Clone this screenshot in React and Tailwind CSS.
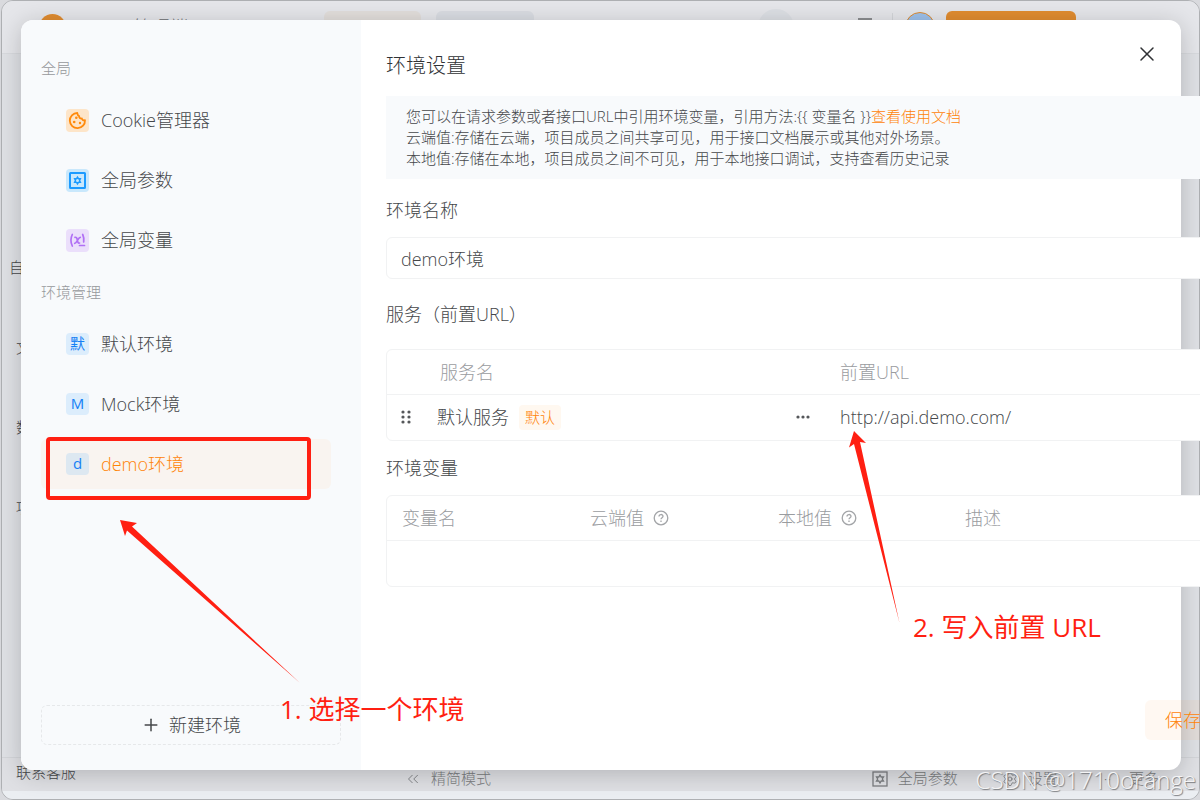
import React, { useState } from 'react';
import { X, Plus, ChevronsLeft, Settings } from 'lucide-react';

const CookieIcon = () => (
  <svg viewBox="0 0 23 23" className="size-[23px]" fill="none">
    <rect width="23" height="23" rx="4" fill="#fde5c9" />
    <path
      d="M11.300 4a7.600 7.600 0 1 0 7.700 7.200c-1.600.5-2.900-.2-3.100-1.700-1.700.3-3-.8-2.700-2.400-1.200-.4-1.800-1.600-1.900-3.100Z"
      stroke="#ff8a0c"
      strokeWidth="1.800"
      strokeLinejoin="round"
    />
    <circle cx="10.300" cy="8.800" r="1.300" fill="#ff8a0c" />
    <circle cx="8.200" cy="13" r="1.300" fill="#ff8a0c" />
    <circle cx="14" cy="14" r="1.200" fill="#ff8a0c" />
  </svg>
);

const ParamsIcon = () => (
  <svg viewBox="0 0 23 23" className="size-[23px]" fill="none">
    <rect width="23" height="23" rx="4" fill="#c9e8fc" />
    <rect x="4" y="4" width="15" height="15" rx="0.5" stroke="#1c9bff" strokeWidth="2" />
    <path
      d="M11.500 6.800l1.400 2.200 2.600.1-1.200 2.400 1.200 2.400-2.600.1-1.400 2.200-1.400-2.200-2.600-.1 1.200-2.400-1.200-2.400 2.600-.1Z"
      fill="#1c9bff"
    />
    <circle cx="11.500" cy="11.500" r="1.500" fill="#c9e8fc" />
  </svg>
);

const VariableIcon = () => (
  <svg viewBox="0 0 23 23" className="size-[23px]" fill="none" stroke="#b170f5" strokeWidth="1.700" strokeLinecap="round">
    <rect width="23" height="23" rx="4" fill="#ebdffb" stroke="none" />
    <path d="M6.300 5.500c-1.700 3.500-1.700 8 0 11.500M16.700 5.500c1 2 1.300 4.500 1 7.500M13.500 16.500h5" />
    <path d="M9 8.300c1.400-.3 1.900.6 2.300 2.600.4 2.300.9 3.500 2.200 3.100M14.300 8.300c-2 0-3.400 6-5.600 6" />
  </svg>
);

const LetterIcon = ({ children }) => (
  <span className="flex h-[22px] w-[23px] items-center justify-center rounded bg-[#1890ff]/12 text-[15px] font-normal text-[#1680f5]">
    {children}
  </span>
);

const HelpIcon = () => (
  <svg viewBox="0 0 16 16" className="size-4" fill="none" stroke="#a3a5a8" strokeWidth="1.300">
    <circle cx="8" cy="8" r="6.800" />
    <path d="M6 6.500c0-2.600 4-2.600 4-.2 0 1.400-2 1.400-2 3" />
    <path d="M8 10.600v1.400" />
  </svg>
);

const globalItems = [
  { id: 'cookie', name: 'Cookie管理器', icon: <CookieIcon /> },
  { id: 'params', name: '全局参数', icon: <ParamsIcon /> },
  { id: 'vars', name: '全局变量', icon: <VariableIcon /> },
];

const envItems = [
  { id: 'default', name: '默认环境', icon: <LetterIcon>默</LetterIcon> },
  { id: 'mock', name: 'Mock环境', icon: <LetterIcon>M</LetterIcon> },
  { id: 'demo', name: 'demo环境', icon: <LetterIcon>d</LetterIcon> },
];

const NavList = ({ items, active, onSelect }) => (
  <ul className="mr-[10px] flex flex-col gap-[10px]">
    {items.map((item) => (
      <li key={item.id}>
        <button
          type="button"
          onClick={() => onSelect(item.id)}
          className={`flex h-[50px] w-full items-center gap-3 rounded-md pl-[25px] text-lg ${
            active === item.id ? 'bg-[#f9f4f0] text-[#ff8409]' : 'text-[#45474a]'
          }`}
        >
          {item.icon}
          <span>{item.name}</span>
        </button>
      </li>
    ))}
  </ul>
);

const Sidebar = ({ active, onSelect }) => (
  <aside className="flex w-[340px] shrink-0 flex-col rounded-l-xl bg-[#f8fafc] px-5 pt-[37px] pb-[25px]">
    <h2 className="mb-4 h-[22px] text-[15px] leading-[22px] text-[#96989b]">全局</h2>
    <NavList items={globalItems} active={active} onSelect={onSelect} />
    <h2 className="mt-4 mb-4 h-[22px] text-[15px] leading-[22px] text-[#96989b]">环境管理</h2>
    <NavList items={envItems} active={active} onSelect={onSelect} />
    <button
      type="button"
      className="mt-auto flex h-10 items-center justify-center gap-2 rounded-md border border-dashed border-[#e6e8ea] text-lg text-[#45474a]"
    >
      <Plus size={20} strokeWidth={1.8} />
      新建环境
    </button>
  </aside>
);

const ServiceTable = () => (
  <div className="rounded-md border border-[#f1f2f3] bg-white">
    <table className="w-full table-fixed text-left text-lg">
      <thead>
        <tr className="h-11 border-b border-[#f1f2f3] text-[#9a9c9f]">
          <th className="w-[50px]" aria-label="排序" />
          <th className="w-[358px] pl-[3px] font-light">服务名</th>
          <th className="w-[45px]" aria-label="更多" />
          <th className="font-light">前置URL</th>
        </tr>
      </thead>
      <tbody>
        <tr className="h-[46px]">
          <td className="pl-[14px]">
            <svg viewBox="0 0 10 14" className="h-[14px] w-[10px]" fill="#55575a">
              <circle cx="2" cy="2" r="1.600" />
              <circle cx="8" cy="2" r="1.600" />
              <circle cx="2" cy="7" r="1.600" />
              <circle cx="8" cy="7" r="1.600" />
              <circle cx="2" cy="12" r="1.600" />
              <circle cx="8" cy="12" r="1.600" />
            </svg>
          </td>
          <td>
            <div className="flex items-center gap-[10px]">
              默认服务
              <span className="rounded bg-[#fff8f0] px-[6px] text-[15px] leading-[25px] text-[#ff8409]">默认</span>
            </div>
          </td>
          <td>
            <button type="button" aria-label="更多操作" className="flex h-6 w-6 items-center justify-start">
              <svg viewBox="0 0 16 4" className="h-1 w-4" fill="#55575a">
                <circle cx="3" cy="2" r="1.600" />
                <circle cx="8" cy="2" r="1.600" />
                <circle cx="13" cy="2" r="1.600" />
              </svg>
            </button>
          </td>
          <td>http://api.demo.com/</td>
        </tr>
      </tbody>
    </table>
  </div>
);

const VariableTable = () => (
  <div className="rounded-md border border-[#f1f2f3] bg-white">
    <table className="w-full table-fixed text-left text-lg">
      <thead>
        <tr className="h-11 border-b border-[#f1f2f3] text-[#9a9c9f]">
          <th className="w-[188px] pl-[15px] font-light">变量名</th>
          <th className="w-[188px] pl-[15px] font-light">
            <span className="flex items-center gap-[9px]">
              云端值 <HelpIcon />
            </span>
          </th>
          <th className="w-[187px] pl-[15px] font-light">
            <span className="flex items-center gap-[9px]">
              本地值 <HelpIcon />
            </span>
          </th>
          <th className="pl-[15px] font-light">描述</th>
        </tr>
      </thead>
      <tbody>
        <tr className="h-[46px]">
          <td colSpan={4} />
        </tr>
      </tbody>
    </table>
  </div>
);

const EnvSettings = () => {
  const [name, setName] = useState('demo环境');

  return (
    <main className="-mr-[60px] flex min-w-0 flex-1 flex-col pt-[33px] pb-[30px] pl-[25px] text-[#45474a]">
      <h1 className="mb-[17px] h-[26px] text-xl leading-[26px] text-[#303235]">环境设置</h1>
      <div className="bg-[#f8fafc] px-5 py-[10px] text-[15px] leading-[21px]">
        <p>
          您可以在请求参数或者接口URL中引用环境变量，引用方法:{'{{ 变量名 }}'}
          <a href="#" className="text-[#ff8409]">查看使用文档</a>
        </p>
        <p>云端值:存储在云端，项目成员之间共享可见，用于接口文档展示或其他对外场景。</p>
        <p>本地值:存储在本地，项目成员之间不可见，用于本地接口调试，支持查看历史记录</p>
      </div>
      <label htmlFor="env-name" className="mt-[19px] mb-[15px] h-6 text-lg leading-6">
        环境名称
      </label>
      <input
        id="env-name"
        value={name}
        onChange={(e) => setName(e.target.value)}
        className="h-[42px] rounded-md border border-[#f1f2f3] bg-white px-[14px] text-lg outline-none"
      />
      <h2 className="mt-[23px] mb-[23px] h-6 text-lg leading-6">服务（前置URL）</h2>
      <ServiceTable />
      <h2 className="mt-[15px] mb-[15px] h-6 text-lg leading-6">环境变量</h2>
      <VariableTable />
      <div className="mt-auto flex justify-end pr-5">
        <button type="button" className="h-10 rounded-md bg-[#ff8c1a]/6 px-5 text-lg text-[#ff8409]">
          保存
        </button>
      </div>
    </main>
  );
};

// Workbench window that sits dimmed behind the dialog
const Workbench = () => (
  <div className="ml-px flex h-full flex-col overflow-hidden rounded-xl border border-[#aeb0b3] bg-[#dfe1e5]">
    <header className="flex h-[53px] shrink-0 items-center border-b border-[#d8dade] bg-[#e5e6ea] pl-[37px] text-lg text-[#6b6d70]">
      <span className="size-[27px] rounded-full bg-[#e08c30]" />
      <span className="ml-[68px] w-[190px]">管理端</span>
      <span className="h-8 w-[97px] rounded-md bg-[#e2dedb]" />
      <span className="ml-[15px] h-8 w-[98px] rounded-md bg-[#d9dce2]" />
      <span className="ml-auto size-9 rounded-full bg-[#dcdfe4]" />
      <span className="ml-[64px] h-[18px] w-[14px] border-2 border-[#8b8d90]" />
      <span className="ml-5 h-7 w-px bg-[#d3d5d9]" />
      <span className="ml-3 size-[30px] rounded-full border border-[#e08c30] bg-[#9dc0ea]" />
      <span className="mr-[123px] ml-[11px] h-8 w-[130px] rounded-md bg-[#e08c30]" />
    </header>
    <div className="flex flex-1 flex-col pl-[14px] text-[15px] text-[#45474a]">
      <span className="-ml-[7px] mt-[203px] h-5 leading-5">自动化测试</span>
      <span className="mt-[60px] h-5 leading-5">文档</span>
      <span className="mt-[60px] h-5 leading-5">数据</span>
      <span className="mt-[60px] h-5 leading-5">项目</span>
    </div>
    <footer className="flex h-[34px] shrink-0 border-t border-[#d3d5d9] bg-[#dfe0e4] text-[15px] text-[#7b7d80]">
      <div className="flex w-[88px] items-center pb-1 pl-[14px] text-[#45474a]">联系客服</div>
      <div className="flex flex-1 items-center pt-2 pr-10 pl-[314px]">
        <span className="flex items-center gap-[9px]">
          <ChevronsLeft size={18} strokeWidth={1.2} />
          精简模式
        </span>
        <span className="ml-auto flex items-center gap-[10px]">
          <svg viewBox="0 0 16 16" className="size-4" fill="none" stroke="#7b7d80" strokeWidth="1.300">
            <rect x="1" y="1" width="14" height="14" />
            <path d="M8 4l1.200 2 2.300 0-1.200 2 1.200 2-2.300 0-1.200 2-1.200-2-2.300 0 1.200-2-1.200-2 2.300 0Z" />
          </svg>
          全局参数
        </span>
        <span className="ml-11 flex items-center gap-[10px]">
          <Settings size={16} strokeWidth={1.3} />
          设置
        </span>
        <span className="ml-[46px] flex items-center gap-[18px]">
          <span>··</span>
          更多
        </span>
      </div>
    </footer>
    <div className="h-[8px] shrink-0 bg-[#ebeef2]" />
  </div>
);

const Annotations = () => (
  <div className="pointer-events-none absolute inset-0 text-[26px] leading-8 font-normal text-[#ff1f12]">
    <div className="absolute top-[437px] left-[46px] h-[63px] w-[265px] rounded border-4 border-[#ff1f12]" />
    <svg className="absolute top-0 left-0" width="1200" height="800" fill="#ff1f12">
      <path d="M120 520l17 3-5 3.500L300 683 127 530.500l-2 5.500Z" />
      <path d="M854 431l12 12-6-1L899.500 623 854 444l-5 3.500Z" />
    </svg>
    <p className="absolute top-[693px] left-[280px]">1. 选择一个环境</p>
    <p className="absolute top-[611px] left-[913px]">2. 写入前置 URL</p>
    <p className="absolute right-1 bottom-1 text-2xl font-light text-[#f4f4f5] [text-shadow:1px_1px_1px_#77797c]">
      CSDN @1710orange
    </p>
  </div>
);

const App = () => {
  const [active, setActive] = useState('demo');

  return (
    <div className="relative h-screen overflow-hidden bg-[#d9dade] font-['Open_Sans','Noto_Sans_CJK_SC',sans-serif] font-light">
      <Workbench />
      <div className="absolute inset-0 pt-5 pr-[19px] pb-[30px] pl-[21px]">
        <div
          role="dialog"
          aria-label="环境设置"
          className="relative flex h-full rounded-xl bg-white shadow-[0_4px_24px_rgba(0,0,0,0.2)]"
        >
          <Sidebar active={active} onSelect={setActive} />
          <EnvSettings />
          <button type="button" aria-label="关闭" className="absolute top-[22px] right-[22px] text-[#303235]">
            <X size={24} strokeWidth={1.5} />
          </button>
        </div>
      </div>
      <Annotations />
    </div>
  );
};

export default App;
